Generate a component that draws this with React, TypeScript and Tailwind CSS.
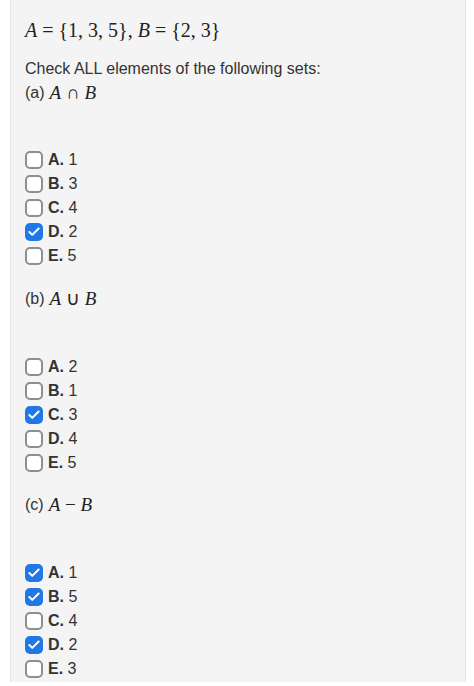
import { Check } from 'lucide-react';

type Option = { letter: string; value: string; checked: boolean };

function Box({ checked }: { checked: boolean }) {
  if (checked) {
    return (
      <span className="flex h-[18px] w-[18px] shrink-0 items-center justify-center rounded-[5px] bg-[#1f78e6]">
        <Check size={14} strokeWidth={3.4} className="text-white" />
      </span>
    );
  }
  return (
    <span className="block h-[18px] w-[18px] shrink-0 rounded-[5px] border-2 border-solid border-[#8e8e8e] bg-white" />
  );
}

function Options({ items }: { items: Option[] }) {
  return (
    <div className="flex flex-col">
      {items.map((o) => (
        <div key={o.letter} className="flex h-6 items-center gap-[5px]">
          <Box checked={o.checked} />
          <span className="text-[16px] text-[#333]">
            <span className="font-bold">{o.letter}.</span> {o.value}
          </span>
        </div>
      ))}
    </div>
  );
}

function Math({ children }: { children: React.ReactNode }) {
  return <span className="font-['Liberation_Serif',serif] text-[19px] text-[#222]">{children}</span>;
}

const V = ({ c }: { c: string }) => <i>{c}</i>;

export default function App() {
  const partA: Option[] = [
    { letter: 'A', value: '1', checked: false },
    { letter: 'B', value: '3', checked: false },
    { letter: 'C', value: '4', checked: false },
    { letter: 'D', value: '2', checked: true },
    { letter: 'E', value: '5', checked: false },
  ];
  const partB: Option[] = [
    { letter: 'A', value: '2', checked: false },
    { letter: 'B', value: '1', checked: false },
    { letter: 'C', value: '3', checked: true },
    { letter: 'D', value: '4', checked: false },
    { letter: 'E', value: '5', checked: false },
  ];
  const partC: Option[] = [
    { letter: 'A', value: '1', checked: true },
    { letter: 'B', value: '5', checked: true },
    { letter: 'C', value: '4', checked: false },
    { letter: 'D', value: '2', checked: true },
    { letter: 'E', value: '3', checked: false },
  ];

  return (
    <div className="min-h-screen bg-white font-['Liberation_Sans',Arial,sans-serif] text-[#333]">
      <div className="mx-[10px] flex h-[682px] w-[456px] flex-col border-x border-[#e6e6e6] bg-[#f4f4f4] pl-[14px] pt-4">
        <div className="flex h-7 items-center text-[20px]">
          <span className="font-['Liberation_Serif',serif] text-[#222]">
            <V c="A" /> = {'{'}1, 3, 5{'}'}, <V c="B" /> = {'{'}2, 3{'}'}
          </span>
        </div>

        <p className="mt-[13px] flex h-6 items-center text-[16px]">Check ALL elements of the following sets:</p>
        <div className="flex h-6 items-center gap-[5px] text-[16px]">
          (a)
          <Math>
            <V c="A" /> ∩ <V c="B" />
          </Math>
        </div>

        <div className="mt-[43px]">
          <Options items={partA} />
        </div>

        <div className="mt-[19px] flex h-6 items-center gap-[5px] text-[16px]">
          (b)
          <Math>
            <V c="A" /> ∪ <V c="B" />
          </Math>
        </div>

        <div className="mt-[44px]">
          <Options items={partB} />
        </div>

        <div className="mt-[18px] flex h-6 items-center gap-[5px] text-[16px]">
          (c)
          <Math>
            <V c="A" /> − <V c="B" />
          </Math>
        </div>

        <div className="mt-[44px]">
          <Options items={partC} />
        </div>
      </div>
    </div>
  );
}
